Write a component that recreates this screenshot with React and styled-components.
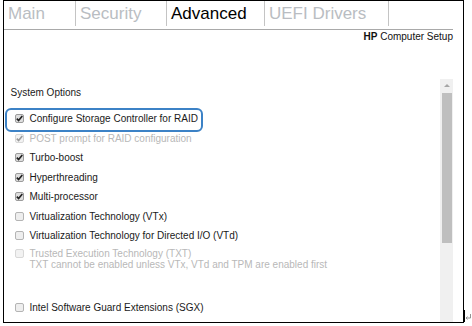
import React from 'react'
import styled, { createGlobalStyle } from 'styled-components'

const GlobalStyle = createGlobalStyle`
  body{ margin:0; background:#fff; font-family:'Liberation Sans', Arial, sans-serif; }
`;

const tabs = [
  { name: 'Main', width: 72 },
  { name: 'Security', width: 91 },
  { name: 'Advanced', width: 98, active: true },
  { name: 'UEFI Drivers', width: 124 },
];

const options = [
  { label: 'Configure Storage Controller for RAID', checked: true, highlight: true },
  { label: 'POST prompt for RAID configuration', checked: true, disabled: true },
  { label: 'Turbo-boost', checked: true },
  { label: 'Hyperthreading', checked: true },
  { label: 'Multi-processor', checked: true },
  { label: 'Virtualization Technology (VTx)' },
  { label: 'Virtualization Technology for Directed I/O (VTd)' },
  { label: 'Trusted Execution Technology (TXT)', note: 'TXT cannot be enabled unless VTx, VTd and TPM are enabled first', disabled: true },
  { label: 'Intel Software Guard Extensions (SGX)', gap: true },
];

function Check({ checked, disabled }) {
  return (
    <Box $checked={checked} $disabled={disabled}>
      {checked && (
        <svg width="9" height="9" viewBox="0 0 9 9">
          <path d="M1.8 4.6 L3.6 6.6 L7.3 2" fill="none" stroke={disabled ? '#9a9a9a' : '#222'} strokeWidth="1.6" />
        </svg>
      )}
    </Box>
  );
}

function App() {
  return (
    <Page>
      <GlobalStyle />
      <Frame>
        <TabBar>
          {tabs.map((t) => (
            <Tab key={t.name} $w={t.width} $active={t.active}>{t.name}</Tab>
          ))}
        </TabBar>
        <Rule />
        <Brand><b>HP</b> Computer Setup</Brand>
        <Body>
          <Content>
            <Section>System Options</Section>
            {options.map((o) => (
              <Row key={o.label} $gap={o.gap} $tall={!!o.note}>
                {o.highlight && <Highlight />}
                <Check checked={o.checked} disabled={o.disabled} />
                <Label $disabled={o.disabled}>
                  {o.label}
                  {o.note && <Note>{o.note}</Note>}
                </Label>
              </Row>
            ))}
          </Content>
          <Scrollbar>
            <Arrow />
            <Thumb />
          </Scrollbar>
        </Body>
      </Frame>
      <Mark width="8" height="12" viewBox="0 0 8 12">
        <path d="M0.5 0 V12" stroke="#000" strokeWidth="1" />
        <path d="M6.5 4 V8 H2 M3.5 6.5 L2 8 L3.5 9.5" fill="none" stroke="#888" strokeWidth="0.9" />
      </Mark>
    </Page>
  )
}

const Page = styled.div`
  display:flex; align-items:flex-end;
  width:472px; height:326px;
  padding-left:3px; box-sizing:border-box;
`;
const Frame = styled.div`
  width:461px; height:323px;
  box-sizing:border-box;
  border:1.5px solid #000; border-top-width:1px;
  display:flex; flex-direction:column;
  margin-bottom:3px; align-self:flex-start;
`;
const TabBar = styled.div`
  display:flex; height:26px;
`;
const Tab = styled.div`
  width:${p => p.$w}px; height:25px;
  box-sizing:border-box;
  padding-left:4px;
  border-right:1.5px solid #c4c4c4;
  font-size:17px; line-height:26px;
  color:${p => p.$active ? '#000' : '#b9bdc2'};
  white-space:nowrap;
`;
const Rule = styled.div`
  height:1px; background:#a9a9a9;
  margin:2px 10px 0 0;
`;
const Brand = styled.div`
  text-align:right; padding-right:10px;
  font-size:10px; line-height:12px; color:#111;
  margin-top:1px;
  b{ font-weight:bold; }
`;
const Body = styled.div`
  flex:1; display:flex; min-height:0;
`;
const Content = styled.div`
  flex:1; padding:44px 0 0 6.5px;
  font-size:10px; color:#1a1a1a;
`;
const Section = styled.div`
  line-height:12px; margin-bottom:10px;
`;
const Row = styled.div`
  position:relative;
  display:flex; align-items:${p => p.$tall ? 'flex-start' : 'center'};
  min-height:19.5px;
  padding-top:${p => p.$tall ? '2.5px' : '0'};
  margin-top:${p => p.$gap ? '28px' : '0'};
  gap:6px;
  box-sizing:border-box;
`;
const Highlight = styled.div`
  position:absolute;
  left:-6px; top:-1px;
  width:198px; height:23.5px;
  box-sizing:border-box;
  border:2.5px solid #3c82c6;
  border-radius:6px;
  pointer-events:none;
`;
const Box = styled.span`
  flex:none;
  width:9px; height:9px;
  margin-left:4px;
  margin-top:${p => (p.$disabled && !p.$checked) ? '1px' : '0'};
  box-sizing:border-box;
  border:1px solid ${p => p.$disabled ? '#d8d8d8' : p.$checked ? '#9c9c9c' : '#b4b4b4'};
  border-radius:2px;
  background:${p => p.$disabled ? '#f2f2f2' : p.$checked ? '#dedede' : '#eeeeee'};
  display:flex; align-items:center; justify-content:center;
  svg{ display:block; margin:-1px; }
`;
const Label = styled.div`
  line-height:11px;
  color:${p => p.$disabled ? '#b8b8b8' : '#1a1a1a'};
`;
const Note = styled.div``;
const Scrollbar = styled.div`
  width:13px; margin:36px 10px 0 0;
  background:#f0f0f0;
  display:flex; flex-direction:column; align-items:center;
`;
const Arrow = styled.div`
  width:0; height:0; margin-top:5px;
  border-left:3px solid transparent; border-right:3px solid transparent;
  border-bottom:3px solid #a6a6a6;
`;
const Thumb = styled.div`
  width:10px; height:150px; margin-top:6px;
  background:#bfbfbf;
`;
const Mark = styled.svg`
  display:block; margin:0 0 4px 0;
`;

export default App
